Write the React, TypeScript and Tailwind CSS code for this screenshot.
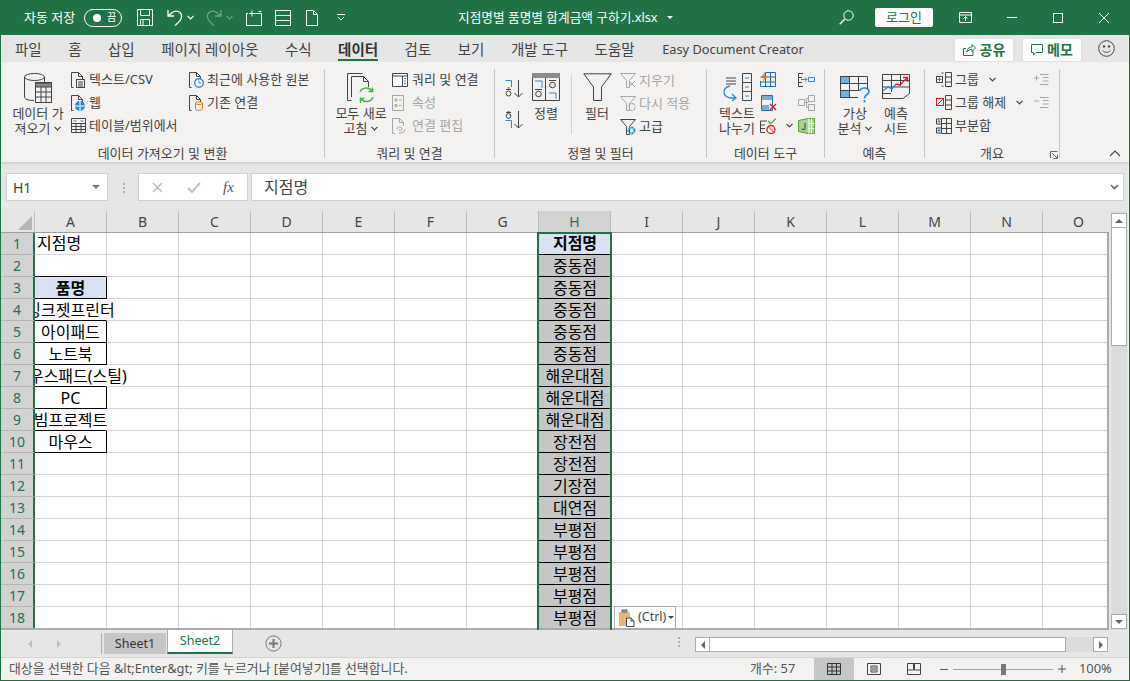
import type { ReactNode } from 'react';

const COLS = ['A', 'B', 'C', 'D', 'E', 'F', 'G', 'H', 'I', 'J', 'K', 'L', 'M', 'N', 'O'];
const ROWS = Array.from({ length: 19 }, (_, i) => i + 1);

const BRANCHES = ['지점명', '중동점', '중동점', '중동점', '중동점', '중동점', '해운대점', '해운대점', '해운대점', '장전점', '장전점', '기장점', '대연점', '부평점', '부평점', '부평점', '부평점', '부평점', ''];

// column A contents, row number -> text
const ITEMS: Record<number, string> = { 3: '품명', 4: '잉크젯프린터', 5: '아이패드', 6: '노트북', 7: '마우스패드(스틸)', 8: 'PC', 9: '빔프로젝트', 10: '마우스' };
const BOXED = [3, 5, 6, 8, 10];

function Ico({ w, h, stroke = '#444', children }: { w: number; h: number; stroke?: string; children: ReactNode }) {
  return (
    <svg width={w} height={h} viewBox={`0 0 ${w} ${h}`} fill="none" stroke={stroke} strokeWidth="1" className="block shrink-0">
      {children}
    </svg>
  );
}

function Chev({ color = '#444' }: { color?: string }) {
  return (
    <svg width="7" height="5" viewBox="0 0 7 5" fill="none" stroke={color} strokeWidth="1.2" className="shrink-0">
      <path d="M.5 .8 3.5 3.8 6.5 .8" />
    </svg>
  );
}

const Doc = ({ c = '#444' }: { c?: string }) => <path stroke={c} d="M2.5 15.5H.5V.5H7.5L11.5 4.5V7M7.5 .5V4.5H11.5" />;

function Big({ w, icon, lines, chevron }: { w: string; icon: ReactNode; lines: string[]; chevron?: boolean }) {
  return (
    <div className={`flex flex-col items-center pt-[5px] shrink-0 ${w}`}>
      <div className="h-[33px] flex items-start justify-center">{icon}</div>
      {lines.map((l, i) => (
        <div key={l} className="flex items-center gap-[4px] leading-[15px] whitespace-nowrap">
          {l}
          {chevron && i === lines.length - 1 && <Chev />}
        </div>
      ))}
    </div>
  );
}

function Small({ icon, label, iconBox, dim, chevron }: { icon: ReactNode; label: string; iconBox: string; dim?: boolean; chevron?: string }) {
  return (
    <div className={`flex items-center h-[23px] whitespace-nowrap ${dim ? 'text-[#a6a6a6]' : ''}`}>
      <div className={`shrink-0 ${iconBox}`}>{icon}</div>
      <span className="pt-[1px]">{label}</span>
      {chevron && <div className={chevron}><Chev /></div>}
    </div>
  );
}

function Group({ w, label, children, extra }: { w: string; label: string; children: ReactNode; extra?: ReactNode }) {
  return (
    <div className={`flex h-[94px] shrink-0 ${w}`}>
      <div className="relative flex-1 flex flex-col min-w-0">
        <div className="flex h-[77px]">{children}</div>
        <div className="text-center leading-[16px]">{label}</div>
        {extra}
      </div>
      <div className="w-px mt-px h-[89px] bg-[#c8c6c4]" />
    </div>
  );
}

function TitleBar() {
  return (
    <div className="flex items-center h-[35px] bg-[#217346] text-white text-[13px] shrink-0">
      <span className="ml-[23px] w-[59px] whitespace-nowrap">자동 저장</span>
      <div className="ml-[1px] flex items-center w-[38px] h-[18px] rounded-full border border-white">
        <div className="ml-[8px] w-[8px] h-[8px] rounded-full bg-white" />
        <span className="ml-[6px] text-[10px]">끔</span>
      </div>
      <div className="ml-[15px]">
        <Ico w={16} h={17} stroke="#fff">
          <path d="M.5 .5H15.5V16.5H.5ZM3.5 .5V6.5H12.5V.5M3.5 16.5V10.5H12.5V16.5M6 11V16" />
        </Ico>
      </div>
      <div className="ml-[14px]">
        <Ico w={16} h={17} stroke="#fff">
          <path strokeWidth="1.3" d="M1 1V7H7M1.5 6.5 6 3C10 1 15 3 14.5 8 14 12 11 14 8 16.5" />
        </Ico>
      </div>
      <div className="ml-[4px]"><Chev color="#fff" /></div>
      <div className="ml-[12px]">
        <Ico w={16} h={17} stroke="#6fa287">
          <path strokeWidth="1.3" d="M15 1V7H9M14.5 6.5 10 3C6 1 1 3 1.5 8 2 12 5 14 8 16.5" />
        </Ico>
      </div>
      <div className="ml-[4px]"><Chev color="#6fa287" /></div>
      <div className="ml-[13px]">
        <Ico w={17} h={16} stroke="#fff">
          <path d="M.5 3.5V15.5H15.5V3.5H9M.5 3.5H2M6 .5V6.5M3 3.5H9M12.5 1.5H15.5" />
        </Ico>
      </div>
      <div className="ml-[12px]">
        <Ico w={16} h={16} stroke="#fff">
          <path d="M.5 .5H15.5V15.5H.5ZM.5 5.5H15.5M.5 10.5H15.5" />
        </Ico>
      </div>
      <div className="ml-[15px]">
        <Ico w={12} h={16} stroke="#fff">
          <path d="M.5 .5H7.5L11.5 4.5V15.5H.5ZM7.5 .5V4.5H11.5" />
        </Ico>
      </div>
      <div className="ml-[19px]">
        <Ico w={8} h={7} stroke="#fff">
          <path d="M0 .5H8M1 3 4 6 7 3" />
        </Ico>
      </div>
      <span className="ml-[113px] w-[202px] text-[12.7px] whitespace-nowrap">지점명별 품명별 합계금액 구하기.xlsx</span>
      <div className="ml-[7px] w-0 h-0 border-x-[3px] border-t-[3px] border-x-transparent border-t-white" />
      <div className="ml-[166px]">
        <Ico w={15} h={15} stroke="#fff">
          <circle cx="9.5" cy="5.5" r="4.7" />
          <path strokeWidth="1.3" d="M6 9 .7 14.3" />
        </Ico>
      </div>
      <div className="ml-[21px] w-[58px] h-[19px] flex items-center justify-center rounded-[2px] bg-white text-[#217346] text-[13px]">로그인</div>
      <div className="ml-[26px]">
        <Ico w={13} h={11} stroke="#fff">
          <path d="M.5 .5H12.5V10.5H.5ZM.5 3H12.5M6.5 9V4.5M4.5 6.5 6.5 4.5 8.5 6.5" />
        </Ico>
      </div>
      <div className="ml-[35px] w-[10px] h-px bg-white" />
      <div className="ml-[36px] w-[10px] h-[10px] border border-white" />
      <div className="ml-[36px]">
        <Ico w={10} h={10} stroke="#fff">
          <path d="M0 0 10 10M10 0 0 10" />
        </Ico>
      </div>
    </div>
  );
}

function TabRow() {
  const tabs = ['파일', '홈', '삽입', '페이지 레이아웃', '수식', '데이터', '검토', '보기', '개발 도구', '도움말'];
  return (
    <div className="flex items-center h-[27px] pt-[2px] pl-[14px] pr-[14px] gap-[26.5px] text-[14.5px] text-[#444] shrink-0">
      {tabs.map((t) =>
        t === '데이터' ? (
          <div key={t} className="relative font-bold text-[#333] whitespace-nowrap">
            {t}
            <div className="absolute left-0 right-0 top-[20px] h-[2px] bg-[#217346]" />
          </div>
        ) : (
          <div key={t} className="whitespace-nowrap">{t}</div>
        )
      )}
      <div className="-ml-[25px] pl-[26px] text-[12.8px] whitespace-nowrap">Easy Document Creator</div>
      <div className="flex items-center ml-auto gap-[8px]">
        <div className="flex items-center justify-center gap-[4px] w-[60px] h-[24px] bg-white border border-[#e1dfdd] rounded-[2px] font-bold text-[#217346] text-[14px]">
          <Ico w={13} h={13} stroke="#217346">
            <path d="M10 7.5V12.5H.5V5.5H3M4 9C4 5 7 4 9 4V1.5L12.5 5 9 8.5V6.5C7 6.5 5 7 4 9Z" />
          </Ico>
          공유
        </div>
        <div className="flex items-center justify-center gap-[4px] w-[60px] h-[24px] bg-white border border-[#e1dfdd] rounded-[2px] font-bold text-[#217346] text-[14px]">
          <Ico w={12} h={12} stroke="#217346">
            <path d="M.5 .5H11.5V8.5H5L2.5 11V8.5H.5Z" />
          </Ico>
          메모
        </div>
        <div className="ml-[8px] -mt-[2px]">
          <Ico w={17} h={17} stroke="#444">
            <circle cx="8.5" cy="8.5" r="7.8" />
            <path d="M5 10.5C6 13 11 13 12 10.5" />
            <circle cx="6" cy="6.5" r=".8" fill="#444" />
            <circle cx="11" cy="6.5" r=".8" fill="#444" />
          </Ico>
        </div>
      </div>
    </div>
  );
}

function Ribbon() {
  const box18 = 'w-[18px]';
  const box20 = 'w-[20px]';
  const box19 = 'w-[19px]';
  return (
    <div className="flex h-[100px] pt-[6px] bg-[#f3f2f1] text-[13px] text-[#444] shrink-0">
      <Group w="w-[324px]" label="데이터 가져오기 및 변환">
        <Big
          w="w-[62px] ml-[6px]"
          lines={['데이터 가', '져오기']}
          chevron
          icon={
            <Ico w={28} h={31}>
              <path d="M.5 4V24C.5 26 4 27.5 10 27.5M20.5 4V9" />
              <ellipse cx="10.5" cy="4" rx="10" ry="3.5" />
              <rect x="11.5" y="9.5" width="16" height="20" fill="#f3f2f1" />
              <path d="M11.5 10H27.5V14H11.5Z" fill="#8a8a8a" />
              <path d="M11.5 19H27.5M11.5 24H27.5M17 14V29.5M22 14V29.5" />
            </Ico>
          }
        />
        <div className="ml-[2px] w-[118px] shrink-0">
          <Small
            iconBox={box18}
            label="텍스트/CSV"
            icon={
              <Ico w={14} h={16}>
                <Doc />
                <rect x="5.5" y="7.5" width="8" height="8" />
                <path d="M7 10H12M7 12H12M7 14H12" />
              </Ico>
            }
          />
          <Small
            iconBox={box18}
            label="웹"
            icon={
              <Ico w={14} h={16}>
                <Doc />
                <circle cx="9" cy="11" r="5" fill="#2b88d8" stroke="none" />
                <path stroke="#fff" d="M4 11H14M9 6V16" />
              </Ico>
            }
          />
          <Small
            iconBox={box18}
            label="테이블/범위에서"
            icon={
              <Ico w={15} h={15}>
                <path d="M.5 .5H14.5V14.5H.5ZM.5 5.5H14.5M.5 8.5H14.5M.5 11.5H14.5M5 5.5V14.5M10 5.5V14.5" />
                <path stroke="#2b88d8" d="M2.5 2.5 4 3.5 5.5 2.5M9.5 2.5 11 3.5 12.5 2.5" />
              </Ico>
            }
          />
        </div>
        <div className="w-[120px] shrink-0">
          <Small
            iconBox={box18}
            label="최근에 사용한 원본"
            icon={
              <Ico w={15} h={16}>
                <Doc />
                <circle cx="10" cy="11" r="4.3" fill="#fff" stroke="#2b88d8" strokeWidth="1.4" />
                <path stroke="#2b88d8" d="M10 8.5V11H12" />
              </Ico>
            }
          />
          <Small
            iconBox={box18}
            label="기존 연결"
            icon={
              <Ico w={15} h={16}>
                <Doc />
                <path stroke="#e8710a" fill="#fff" d="M6.5 8V14C6.5 15.5 13.5 15.5 13.5 14V8C13.5 6.5 6.5 6.5 6.5 8ZM6.5 8.5C8 9.8 12 9.8 13.5 8.5" />
              </Ico>
            }
          />
        </div>
      </Group>

      <Group w="w-[170px]" label="쿼리 및 연결">
        <Big
          w="w-[56px] ml-[8px]"
          lines={['모두 새로', '고침']}
          chevron
          icon={
            <Ico w={28} h={31}>
              <path d="M4.5 27.5H.5V.5H15.5M4.5 24V3.5H16.5L21.5 8.5V14M16.5 3.5V8.5H21.5" />
              <path stroke="#4caf50" strokeWidth="1.5" d="M13 19A7 7 0 0 1 25 18M26 24A7 7 0 0 1 14 26M25.5 14.5V18.5H21.5M13.5 30V25.5H17.5" />
            </Ico>
          }
        />
        <div className="ml-[3px] shrink-0">
          <Small
            iconBox={box20}
            label="쿼리 및 연결"
            icon={
              <Ico w={16} h={14}>
                <path d="M.5 .5H15.5V13.5H.5ZM.5 3H15.5M10.5 3V13.5" fill="#fff" />
                <path stroke="#2b88d8" d="M12 5.5H14M12 8H14M12 10.5H14" />
              </Ico>
            }
          />
          <Small
            iconBox={box20}
            label="속성"
            dim
            icon={
              <Ico w={12} h={16} stroke="#a6a6a6">
                <path d="M.5 .5H11.5V15.5H.5ZM3 4H5V6H3ZM3 9.5H5V11.5H3ZM7 5H9.5M7 10.5H9.5" />
              </Ico>
            }
          />
          <Small
            iconBox={box20}
            label="연결 편집"
            dim
            icon={
              <Ico w={14} h={16} stroke="#a6a6a6">
                <path d="M3 15.5H.5V.5H7.5L11.5 4.5V8M7.5 .5V4.5H11.5" />
                <path d="M5 11C5 8 10 8 10 11 10 13 7 13 7 11M7 15C12 15 13 13 13 11" />
              </Ico>
            }
          />
        </div>
      </Group>

      <Group w="w-[212px]" label="정렬 및 필터">
        <div className="ml-[10px] w-[19px] shrink-0 flex flex-col pt-[12px] gap-[13px]">
          <Ico w={18} h={18}>
            <path stroke="#2b88d8" d="M.5 .5H6.5V7" />
            <circle cx="3.5" cy="13.5" r="2.5" />
            <path d="M1 9.5H6M2.5 8H4.5M13.5 0V17M9.5 13 13.5 17 17.5 13" />
          </Ico>
          <Ico w={18} h={18}>
            <circle cx="3.5" cy="5" r="2.3" />
            <path d="M1 1.5H6M2.5 .2H4.5M13.5 0V17M9.5 13 13.5 17 17.5 13" />
            <path stroke="#2b88d8" d="M.5 9.5H6.5V17" />
          </Ico>
        </div>
        <Big
          w="w-[28px] ml-[8px]"
          lines={['정렬']}
          icon={
            <Ico w={28} h={28}>
              <path d="M.5 .5H27.5V27.5H.5Z" />
              <path d="M0 0H28V5H0Z" fill="#8a8a8a" stroke="none" />
              <path d="M13.5 5V27.5" />
              <path stroke="#2b88d8" d="M3 8H10V15M17 20H24V26" />
              <circle cx="6.5" cy="21" r="2.8" />
              <path d="M3 16.5H10" />
              <circle cx="20.5" cy="12" r="2.8" />
              <path d="M17 7.5H24" />
            </Ico>
          }
        />
        <div className="ml-[11px] mt-[7px] w-px h-[59px] bg-[#d4d2d0]" />
        <Big
          w="w-[30px] ml-[10px]"
          lines={['필터']}
          icon={
            <Ico w={29} h={28}>
              <path d="M.8 .8H28.2L18.5 14V27.5H10.5V14Z" />
            </Ico>
          }
        />
        <div className="ml-[8px] shrink-0 pt-px">
          <Small
            iconBox={box19}
            label="지우기"
            dim
            icon={
              <Ico w={16} h={15} stroke="#a6a6a6">
                <path d="M.5 .5H15.5L9.5 7.5V14.5H6.5V7.5Z" />
                <path d="M9 8 15 14M15 8 9 14" />
              </Ico>
            }
          />
          <Small
            iconBox={box19}
            label="다시 적용"
            dim
            icon={
              <Ico w={16} h={15} stroke="#a6a6a6">
                <path d="M.5 .5H15.5L9.5 7.5V14.5H6.5V7.5Z" />
                <path d="M9 11A3 3 0 0 1 15 10M15 11A3 3 0 0 1 9 12" />
              </Ico>
            }
          />
          <Small
            iconBox={box19}
            label="고급"
            icon={
              <Ico w={16} h={16}>
                <path d="M.5 .5H15.5L9.5 7.5V15.5H6.5V7.5Z" fill="#f3f2f1" />
                <circle cx="11.5" cy="11.5" r="3" stroke="#2b88d8" strokeWidth="2" strokeDasharray="2 .7" />
              </Ico>
            }
          />
        </div>
      </Group>

      <Group w="w-[118px]" label="데이터 도구">
        <Big
          w="w-[40px] ml-[10px]"
          lines={['텍스트', '나누기']}
          icon={
            <Ico w={30} h={28}>
              <path d="M4 5H14M4 8H14M4 11H14M20.5 .5H29.5V27.5H20.5ZM20.5 9.5H29.5M20.5 18.5H29.5" />
              <path stroke="#2b88d8" d="M23 5H27M23 14H27M23 23H27" />
              <path stroke="#2b88d8" strokeWidth="1.3" d="M8 13C0 15 0 23 8 25H14M10 21 14 25 10 28" />
            </Ico>
          }
        />
        <div className="ml-[3px] w-[38px] shrink-0 flex flex-col">
          <div className="h-[23px] flex items-center">
            <Ico w={16} h={15}>
              <path d="M5.5 .5H15.5V14.5H.5V9M5.5 .5V14.5M10.5 .5V14.5M.5 5H15.5M.5 10H15.5" stroke="#1f6fb5" />
              <path d="M5 0 1 6H4L2.5 10 7 4H4.5Z" fill="#e8710a" stroke="none" />
            </Ico>
          </div>
          <div className="h-[23px] flex items-center pl-[1px]">
            <Ico w={16} h={16}>
              <path d="M.5 .5H11.5V15.5H.5Z" stroke="#1f6fb5" />
              <path d="M1 1H11V5H1Z" fill="#6fb1e4" stroke="none" />
              <path d="M1 10H8V15H1Z" fill="#6fb1e4" stroke="none" />
              <path stroke="#e81123" strokeWidth="1.3" d="M9 9 15 15M15 9 9 15" />
            </Ico>
          </div>
          <div className="h-[23px] flex items-center gap-[8px]">
            <Ico w={18} h={16}>
              <path d="M7 3H.5V14.5H5M.5 7H5M.5 10.5H5" />
              <path stroke="#4caf50" strokeWidth="1.3" d="M8 3 10.5 5.5 16 .5" />
              <circle cx="11" cy="11.5" r="4" stroke="#e81123" strokeWidth="1.3" />
              <path stroke="#e81123" d="M8 8.5 14 14.5" />
            </Ico>
            <Chev />
          </div>
        </div>
        <div className="shrink-0 flex flex-col">
          <div className="h-[23px] flex items-center">
            <Ico w={17} h={14}>
              <path d="M5 .5H.5V4.5H4M.5 4.5V13.5H5M.5 9.5H4" />
              <path stroke="#2b88d8" d="M10.5 4.5H16.5V8.5H10.5ZM3 6.5H9M7 4.5 9 6.5 7 8.5" />
            </Ico>
          </div>
          <div className="h-[23px] flex items-center">
            <Ico w={17} h={16} stroke="#a6a6a6">
              <path d="M.5 4.5H6.5V10.5H.5ZM10.5 .5H16.5V6.5H10.5ZM10.5 9.5H16.5V15.5H10.5ZM6.5 7.5H10.5M10.5 3.5H8.5V12.5H10.5" />
            </Ico>
          </div>
          <div className="h-[23px] flex items-center">
            <Ico w={17} h={16} stroke="#5b9e3a">
              <path d="M.5 2.5 10 .5H16.5V15.5H10L.5 13.5Z" fill="#a6d28a" />
              <path stroke="#fff" d="M11 .5V15.5M13.5 .5V15.5M10 5.5H16.5M10 10.5H16.5" />
              <path stroke="#2f6b1f" strokeWidth="1.2" d="M7 5V10.5C7 12 4 12 4 10.5" />
            </Ico>
          </div>
        </div>
      </Group>

      <Group w="w-[100px]" label="예측">
        <Big
          w="w-[40px] ml-[10px]"
          lines={['가상', '분석']}
          chevron
          icon={
            <div className="pt-[3px]">
              <Ico w={31} h={28}>
                <path d="M.5 .5H9.5V7.5H.5ZM.5 14.5H9.5V21.5H.5Z" fill="#6fb1e4" />
                <path d="M.5 .5H27.5V14M.5 .5V21.5H18M9.5 .5V21.5M18.5 .5V14M.5 7.5H27.5M.5 14.5H19" />
                <path stroke="#2b88d8" strokeWidth="1.6" d="M20 15C20 11 29 11 29 15.5 29 19 24.5 18 24.5 22.5M24.5 24V26.5" />
              </Ico>
            </div>
          }
        />
        <Big
          w="w-[40px] ml-[1px]"
          lines={['예측', '시트']}
          icon={
            <div className="pt-px">
              <Ico w={28} h={25}>
                <path d="M.5 .5H27.5V19.5L21 24.5H.5ZM9.5 .5V18M18.5 .5V12M.5 6.5H27.5M.5 13H27.5M.5 19.5H9" />
                <path stroke="#2b88d8" strokeWidth="1.3" d="M1 17 6 13 10 15 14 10" />
                <path stroke="#e81123" strokeWidth="1.3" d="M14 10 18 11 25 4M21 3.5H25.5V8" />
              </Ico>
            </div>
          }
        />
      </Group>

      <Group
        w="w-[135px]"
        label="개요"
        extra={
          <div className="absolute right-[1px] bottom-[3px]">
            <Ico w={8} h={8} stroke="#666">
              <path d="M.5 7V.5H7.5M2 2 7 7M3.5 7.5H7.5V3.5" />
            </Ico>
          </div>
        }
      >
        <div className="ml-[11px] w-[98px] shrink-0">
          <Small
            iconBox={box19}
            label="그룹"
            chevron="ml-[10px]"
            icon={
              <Ico w={16} h={15}>
                <path d="M9.5 .5H15.5V14.5H9.5ZM9.5 5H15.5M9.5 10H15.5M7.5 1H5.5M7.5 14H5.5" />
                <rect x=".5" y="4.5" width="6" height="6" />
                <path stroke="#2b88d8" d="M1.5 7.5H5.5M3.5 5.5V9.5" />
              </Ico>
            }
          />
          <Small
            iconBox={box19}
            label="그룹 해제"
            chevron="ml-[10px]"
            icon={
              <Ico w={16} h={15}>
                <path d="M9.5 .5H15.5V14.5H9.5ZM9.5 5H15.5M9.5 10H15.5" />
                <rect x=".5" y="3.5" width="7" height="7" stroke="#e81123" />
                <path stroke="#e81123" d="M1.5 9.5 6.5 4.5" />
              </Ico>
            }
          />
          <Small
            iconBox={box19}
            label="부분합"
            icon={
              <Ico w={16} h={16}>
                <path d="M5.5 .5H15.5V15.5H5.5ZM10.5 .5V15.5M5.5 5.5H15.5M5.5 10.5H15.5M.5 1H5.5V6H.5ZM.5 10H5.5V15H.5Z" />
                <path stroke="#2b88d8" d="M1.5 3.5H4.5M3 2V5M1.5 12.5H4.5M3 11V14" />
              </Ico>
            }
          />
        </div>
        <div className="shrink-0">
          <div className="h-[23px] flex items-center">
            <Ico w={15} h={13} stroke="#a6a6a6">
              <path d="M6 1.5H14.5M9 4.5H14.5M9 8H14.5M6 11.5H14.5M0 5H5M2.5 2.5V7.5" />
            </Ico>
          </div>
          <div className="h-[23px] flex items-center">
            <Ico w={15} h={13} stroke="#a6a6a6">
              <path d="M6 1.5H14.5M9 4.5H14.5M9 8H14.5M6 11.5H14.5M0 5H5" />
            </Ico>
          </div>
        </div>
      </Group>

      <div className="flex-1 flex justify-end items-end pr-[8px] pb-[5px]">
        <svg width="12" height="7" viewBox="0 0 12 7" fill="none" stroke="#444" strokeWidth="1.1">
          <path d="M1 6 6 1 11 6" />
        </svg>
      </div>
    </div>
  );
}

function FormulaBar() {
  return (
    <div className="flex items-start h-[49px] pt-[11px] shrink-0 text-[#444]">
      <div className="ml-[5px] w-[102px] h-[28px] flex items-center justify-between pl-[6px] pr-[7px] bg-white border border-[#d0d0d0] text-[14px]">
        H1
        <div className="w-0 h-0 border-x-[4px] border-t-[4px] border-x-transparent border-t-[#777]" />
      </div>
      <div className="ml-[15px] mt-[10px] flex flex-col gap-[2px]">
        <div className="w-[2px] h-[2px] bg-[#b0b0b0]" />
        <div className="w-[2px] h-[2px] bg-[#b0b0b0]" />
        <div className="w-[2px] h-[2px] bg-[#b0b0b0]" />
      </div>
      <div className="ml-[13px] w-[110px] h-[28px] flex items-center bg-white border border-[#d0d0d0]">
        <div className="ml-[13px]">
          <Ico w={11} h={11} stroke="#c0c0c0"><path strokeWidth="1.6" d="M1 1 10 10M10 1 1 10" /></Ico>
        </div>
        <div className="ml-[24px]">
          <Ico w={14} h={11} stroke="#c0c0c0"><path strokeWidth="2" d="M1 6 5 10 13 1" /></Ico>
        </div>
        <span className="ml-[22px] font-['Liberation_Serif',serif] italic text-[15px] text-[#555] leading-none">fx</span>
      </div>
      <div className="ml-[3px] w-[873px] h-[28px] flex items-center justify-between pl-[12px] pr-[4px] bg-white border border-[#d0d0d0] text-[16px]">
        지점명
        <svg width="9" height="6" viewBox="0 0 9 6" fill="none" stroke="#666" strokeWidth="1.6"><path d="M1 1 4.5 4.5 8 1" /></svg>
      </div>
    </div>
  );
}

function Sheet() {
  return (
    <div className="relative w-[1108px] h-[419px] shrink-0">
      {/* column header */}
      <div className="flex h-[22px] border-b border-[#a0a0a0] overflow-hidden">
        <div className="w-[34px] shrink-0 flex items-end justify-end pr-[2px] pb-[2px] bg-[#e6e6e6] border-r border-[#c0c0c0]">
          <div className="w-0 h-0 border-l-[14px] border-b-[14px] border-l-transparent border-b-[#b5b5b5]" />
        </div>
        {COLS.map((c) => (
          <div
            key={c}
            className={`w-[72px] shrink-0 flex items-center justify-center border-r border-[#bdbdbd] text-[14px] ${c === 'H' ? 'bg-[#d2d2d2] text-[#2a6f4e]' : 'bg-[#e6e6e6] text-[#444]'}`}
          >
            {c}
          </div>
        ))}
      </div>
      {/* rows */}
      <div className="h-[397px] overflow-hidden bg-white border-b-2 border-[#ababab] border-r-2 text-[16px] leading-[20px] text-black">
        {ROWS.map((r) => {
          const boxed = BOXED.includes(r);
          return (
            <div key={r} className="flex h-[22px]">
              <div className="relative z-10 w-[34px] shrink-0 flex items-center justify-center bg-[#d2d2d2] border-r-2 border-b border-[#b4b4b4] border-r-[#217346] text-[14px] text-[#2a6f4e]">
                {r < 19 ? r : ''}
              </div>
              {COLS.map((c) => {
                if (c === 'A') {
                  return (
                    <div
                      key={c}
                      className={`w-[72px] shrink-0 flex items-center whitespace-nowrap border-r border-b ${r === 1 ? 'justify-start pl-[2px] pb-[2px]' : 'justify-center'} ${boxed ? 'border-r-black' : r >= 3 && r <= 10 ? 'border-r-transparent' : 'border-r-[#d4d4d4]'} ${r >= 2 && r <= 10 ? 'border-b-black' : 'border-b-[#d4d4d4]'} ${r === 3 ? 'bg-[#d9e1f2] font-bold' : ''}`}
                    >
                      {r === 1 ? '지점명' : ITEMS[r]}
                    </div>
                  );
                }
                if (c === 'H') {
                  return (
                    <div
                      key={c}
                      className={`w-[72px] shrink-0 flex items-center justify-center whitespace-nowrap border-b border-b-black ${r === 1 ? 'bg-[#d9e1f2] font-bold pb-[2px]' : 'bg-[#c6c6c6]'}`}
                    >
                      {BRANCHES[r - 1]}
                    </div>
                  );
                }
                return <div key={c} className="w-[72px] shrink-0 border-r border-b border-[#d4d4d4]" />;
              })}
            </div>
          );
        })}
      </div>
      {/* selection outline */}
      <div className="absolute left-[536px] top-[21px] w-[75px] h-[398px] border-2 border-b-0 border-[#217346] pointer-events-none" />
      {/* paste options */}
      <div className="absolute left-[613px] top-[395px] w-[62px] h-[23px] flex items-center pl-[3px] gap-[2px] bg-white border border-[#ababab] text-[12.5px] text-[#444]">
        <Ico w={18} h={18}>
          <path d="M1 3H12V9H8V17H1Z" fill="#e8b778" stroke="none" />
          <path d="M4 3V1H9V3M8.5 9H13L16 12V17.5H8.5ZM13 9V12H16" fill="#fff" />
          <rect x="4" y="1" width="5" height="3" fill="#8a8a8a" stroke="none" />
        </Ico>
        (Ctrl)
        <div className="w-0 h-0 border-x-[3px] border-t-[3px] border-x-transparent border-t-[#444]" />
      </div>
    </div>
  );
}

function VScroll() {
  return (
    <div className="ml-[2px] w-[16px] h-[419px] flex flex-col pt-[2px] bg-[#dcdcdc] shrink-0">
      <div className="h-[15px] flex items-center justify-center bg-white border border-[#ababab]">
        <div className="w-0 h-0 border-x-[4px] border-b-[4px] border-x-transparent border-b-[#666]" />
      </div>
      <div className="h-[118px] bg-white border border-[#ababab] border-t-0" />
      <div className="flex-1" />
      <div className="h-[15px] mb-[1px] flex items-center justify-center bg-white border border-[#ababab]">
        <div className="w-0 h-0 border-x-[4px] border-t-[4px] border-x-transparent border-t-[#666]" />
      </div>
    </div>
  );
}

function TabBar() {
  return (
    <div className="flex h-[27px] shrink-0 text-[12.5px]">
      <div className="ml-[27px] mt-[10px] w-0 h-0 border-y-[4px] border-r-[4px] border-y-transparent border-r-[#bdbdbd]" />
      <div className="ml-[25px] mt-[10px] w-0 h-0 border-y-[4px] border-l-[4px] border-y-transparent border-l-[#bdbdbd]" />
      <div className="ml-[40px] mt-[3px] w-px h-[21px] bg-[#ababab]" />
      <div className="ml-[2px] mt-[3px] w-[62px] h-[21px] pt-px flex items-center justify-center bg-[#c6c6c6] text-[#333]">Sheet1</div>
      <div className="ml-[1px] -mt-px w-[66px] h-[25px] pt-px flex items-center justify-center bg-white text-[#217346] border-x border-[#ababab] border-b-2 border-b-[#217346]">Sheet2</div>
      <div className="ml-[32px] mt-[5px]">
        <Ico w={17} h={17} stroke="#777">
          <circle cx="8.5" cy="8.5" r="7.6" />
          <path strokeWidth="2" d="M4 8.5H13M8.5 4V13" />
        </Ico>
      </div>
      <div className="ml-[396px] mt-[7px] flex flex-col gap-[2px]">
        <div className="w-[2px] h-[2px] bg-[#b0b0b0]" />
        <div className="w-[2px] h-[2px] bg-[#b0b0b0]" />
        <div className="w-[2px] h-[2px] bg-[#b0b0b0]" />
      </div>
      <div className="ml-[15px] mt-[7px] flex h-[15px]">
        <div className="w-[15px] flex items-center justify-center bg-white border border-[#ababab]">
          <div className="w-0 h-0 border-y-[4px] border-r-[4px] border-y-transparent border-r-[#666]" />
        </div>
        <div className="w-[356px] bg-white border border-[#ababab] border-l-0" />
        <div className="w-[27px] bg-[#dcdcdc]" />
        <div className="w-[15px] flex items-center justify-center bg-white border border-[#ababab]">
          <div className="w-0 h-0 border-y-[4px] border-l-[4px] border-y-transparent border-l-[#666]" />
        </div>
      </div>
    </div>
  );
}

function StatusBar() {
  return (
    <div className="flex items-center flex-1 border-t border-[#d4d4d4] bg-[#f3f2f1] text-[12.9px] text-[#555]">
      <span className="ml-[8px] w-[741px] whitespace-nowrap">{'대상을 선택한 다음 &lt;Enter&gt; 키를 누르거나 [붙여넣기]를 선택합니다.'}</span>
      <span className="w-[64px] whitespace-nowrap">개수: 57</span>
      <div className="w-[40px] h-full flex items-center justify-center bg-[#c6c6c6]">
        <Ico w={14} h={12}>
          <path stroke="#333" d="M.5 .5H13.5V11.5H.5ZM.5 4H13.5M.5 8H13.5M5 .5V11.5M9.5 .5V11.5" />
        </Ico>
      </div>
      <div className="ml-[13px]">
        <Ico w={14} h={12}>
          <path d="M.5 .5H13.5V11.5H.5ZM4 3H10V9H4ZM5 5H9M5 7H9" />
        </Ico>
      </div>
      <div className="ml-[26px]">
        <Ico w={14} h={12}>
          <path d="M.5 .5H13.5V11.5H.5ZM.5 7H6.5V.5M7.5 .5V7H13.5" />
        </Ico>
      </div>
      <div className="ml-[19px] w-[8px] h-px bg-[#555]" />
      <div className="relative ml-[5px] w-[100px] h-px bg-[#a6a6a6]">
        <div className="absolute left-[48px] -top-[5px] w-[5px] h-[11px] bg-[#777]" />
      </div>
      <div className="ml-[5px]">
        <Ico w={8} h={8} stroke="#555"><path d="M0 4H8M4 0V8" /></Ico>
      </div>
      <span className="ml-[13px] whitespace-nowrap">100%</span>
    </div>
  );
}

export default function App() {
  return (
    <div className="w-[1130px] h-[681px] flex flex-col overflow-hidden bg-[#e6e6e6] border-x border-b border-[#217346] font-['Noto_Sans','Noto_Sans_CJK_KR',sans-serif]">
      <TitleBar />
      <TabRow />
      <Ribbon />
      <div className="h-[3px] -mb-[3px] relative bg-gradient-to-b from-[#d0d0d0] to-[#e6e6e6] shrink-0" />
      <FormulaBar />
      <div className="flex shrink-0">
        <Sheet />
        <VScroll />
      </div>
      <TabBar />
      <StatusBar />
    </div>
  );
}
